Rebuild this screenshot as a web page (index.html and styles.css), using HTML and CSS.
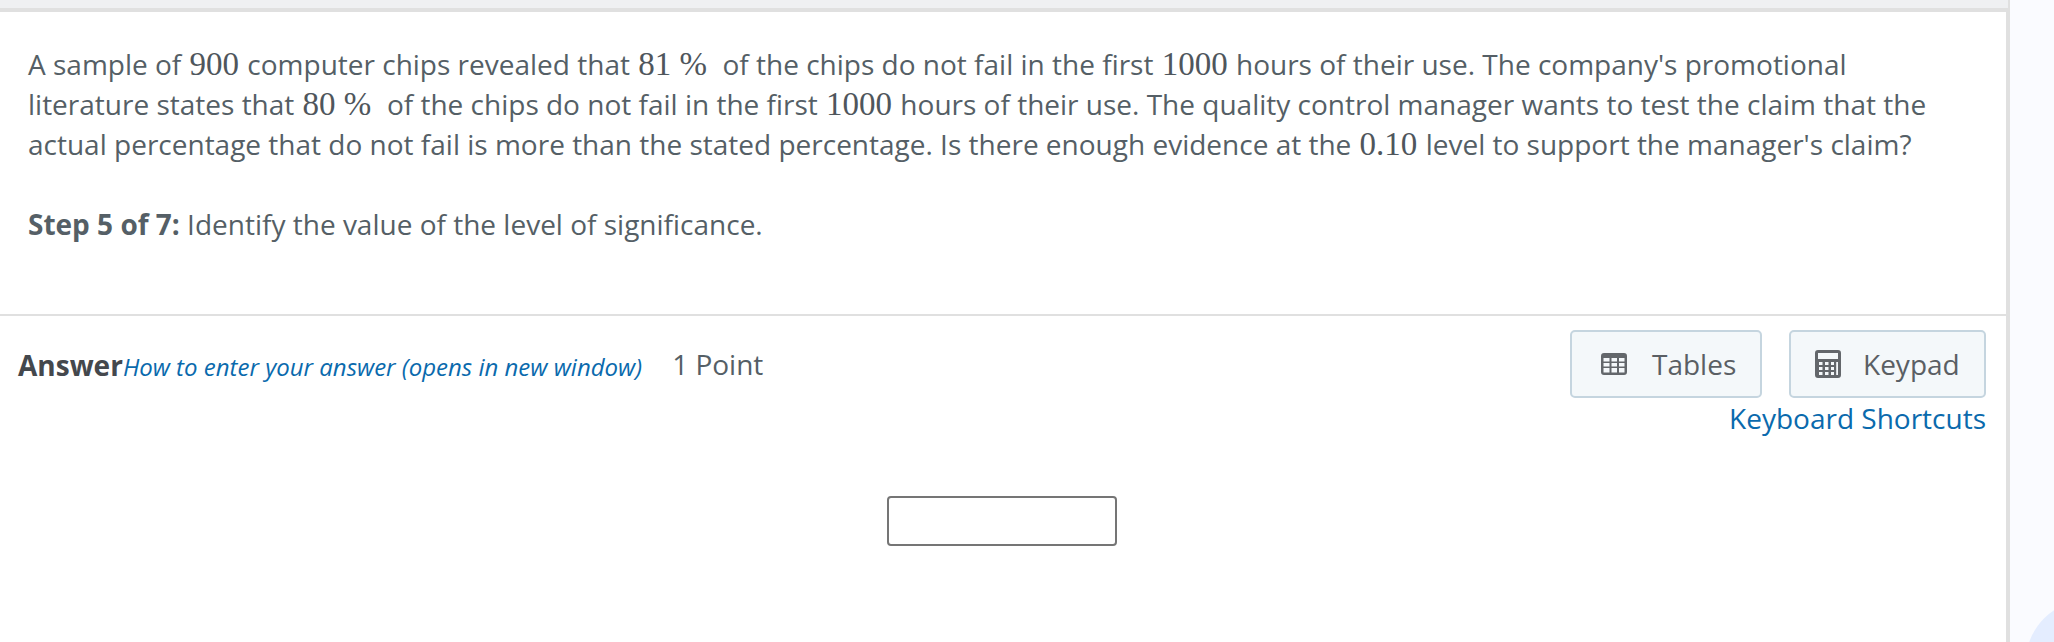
FILE: index.html
```html
<!DOCTYPE html>
<html lang="en">
<head>
    <meta charset="UTF-8">
    <title>Question</title>
    <link rel="stylesheet" href="styles.css">
</head>
<body>
    <div class="top-band"></div>
    <div class="page">
        <main class="question-panel">
            <section class="question">
                <p class="stem">A sample of <span class="math">900</span> computer chips revealed that <span class="math">81 %</span> &nbsp;of the chips do not fail in the first <span class="math">1000</span> hours of their use. The company's promotional<br>literature states that <span class="math">80 %</span> &nbsp;of the chips do not fail in the first <span class="math">1000</span> hours of their use. The quality control manager wants to test the claim that the<br>actual percentage that do not fail is more than the stated percentage. Is there enough evidence at the <span class="math">0.10</span> level to support the manager's claim?</p>
                <p class="step"><strong>Step 5 of 7:</strong> Identify the value of the level of significance.</p>
            </section>
            <section class="answer">
                <div class="answer-header">
                    <div class="answer-title">
                        <span class="answer-label">Answer</span><a class="help-link" href="#">How to enter your answer (opens in new window)</a>
                        <span class="points">1 Point</span>
                    </div>
                    <div class="answer-tools">
                        <div class="tool-buttons">
                            <button class="tool-btn tool-tables" type="button">
                                <svg class="tool-icon" width="26" height="22" viewBox="0 0 26 22"><path fill="#63676b" fill-rule="evenodd" d="M3 0h20a3 3 0 0 1 3 3v16a3 3 0 0 1-3 3H3a3 3 0 0 1-3-3V3a3 3 0 0 1 3-3zM2.500 5v3.500h6V5zm8 0v3.500h5.500V5zm7.500 0v3.500h5.500V5zM2.500 10v3.500h6V10zm8 0v3.500h5.500V10zm7.500 0v3.500h5.500V10zM2.500 15v4.500h6V15zm8 0v4.500h5.500V15zm7.500 0v4.500h5.500V15z"/></svg>
                                Tables
                            </button>
                            <button class="tool-btn tool-keypad" type="button">
                                <svg class="tool-icon" width="26" height="28" viewBox="0 0 26 28"><path fill="#63676b" fill-rule="evenodd" d="M3 0h20a3 3 0 0 1 3 3v22a3 3 0 0 1-3 3H3a3 3 0 0 1-3-3V3a3 3 0 0 1 3-3zM3 3v6h20V3zm1 9v3h3.500v-3zm6 0v3h3.500v-3zm6 0v3h3v-3zm5.200 0v13h1.800V12zM4 17v3h3.500v-3zm6 0v3h3.500v-3zm6 0v3h3v-3zM4 22v3h3.500v-3zm6 0v3h3.500v-3zm6 0v3h3v-3z"/></svg>
                                Keypad
                            </button>
                        </div>
                        <a class="shortcuts-link" href="#">Keyboard Shortcuts</a>
                    </div>
                </div>
                <div class="answer-body">
                    <input class="answer-input" type="text" aria-label="Answer">
                </div>
            </section>
        </main>
        <aside class="side-panel">
            <div class="side-bubble"></div>
        </aside>
    </div>
</body>
</html>
```

FILE: styles.css
```css
* {
    margin: 0;
    padding: 0;
    box-sizing: border-box;
}

html, body {
    height: 100%;
    overflow: hidden;
}

body {
    font-family: "Open Sans", sans-serif;
    font-size: 28px;
    color: #555f66;
    background-color: #ffffff;
}

.top-band {
    width: 2010px;
    height: 8px;
    background-color: #eff0f2;
    border-right: 2px solid #e0e0e0;
}

.page {
    display: flex;
    height: 634px;
}

.question-panel {
    width: 2010px;
    flex-shrink: 0;
    border-top: 4px solid #e0e0e0;
    border-right: 4px solid #e0e0e0;
    background-color: #ffffff;
}

.question {
    padding: 32px 28px 0;
    height: 304px;
    border-bottom: 2px solid #e0e0e0;
}

.stem {
    line-height: 40px;
}

.math {
    margin: 0 1px;
    font-family: "Liberation Serif", serif;
    font-size: 33px;
    color: #4f565c;
}

.step {
    margin-top: 40px;
    line-height: 40px;
}

.answer-header {
    display: flex;
    justify-content: space-between;
    padding: 14px 20px 0 18px;
}

.answer-title {
    display: flex;
    align-items: center;
    height: 68px;
    padding-top: 2px;
}

.answer-label {
    font-weight: 700;
    color: #44484d;
}

.help-link {
    padding-top: 3px;
    font-style: italic;
    font-size: 24px;
    color: #0a6aad;
    text-decoration: none;
}

.points {
    margin-left: 30px;
    padding-bottom: 2px;
}

.answer-tools {
    display: flex;
    flex-direction: column;
    align-items: flex-end;
}

.tool-buttons {
    display: flex;
    gap: 27px;
}

.tool-btn {
    display: flex;
    align-items: center;
    height: 68px;
    border: 2px solid #c5d5df;
    border-radius: 5px;
    background-color: #f4f8fa;
    font-family: inherit;
    font-size: 28px;
    color: #5a5f64;
}

.tool-tables {
    width: 192px;
    padding-left: 29px;
    gap: 25px;
}

.tool-keypad {
    width: 197px;
    padding-left: 24px;
    gap: 22px;
}

.shortcuts-link {
    margin-top: 1px;
    line-height: 38px;
    color: #0a6aad;
    text-decoration: none;
}

.answer-body {
    display: flex;
    justify-content: center;
    margin-top: 59px;
}

.answer-input {
    width: 230px;
    height: 50px;
    border: 2px solid #757575;
    border-radius: 4px;
    background-color: #ffffff;
    margin-left: -2px;
}

.side-panel {
    flex: 1;
    margin-top: -8px;
    background-color: #fafbff;
    position: relative;
    overflow: hidden;
}

.side-bubble {
    position: absolute;
    left: 16px;
    top: 600px;
    width: 124px;
    height: 124px;
    border-radius: 50%;
    background-color: #e4edff;
}
```
